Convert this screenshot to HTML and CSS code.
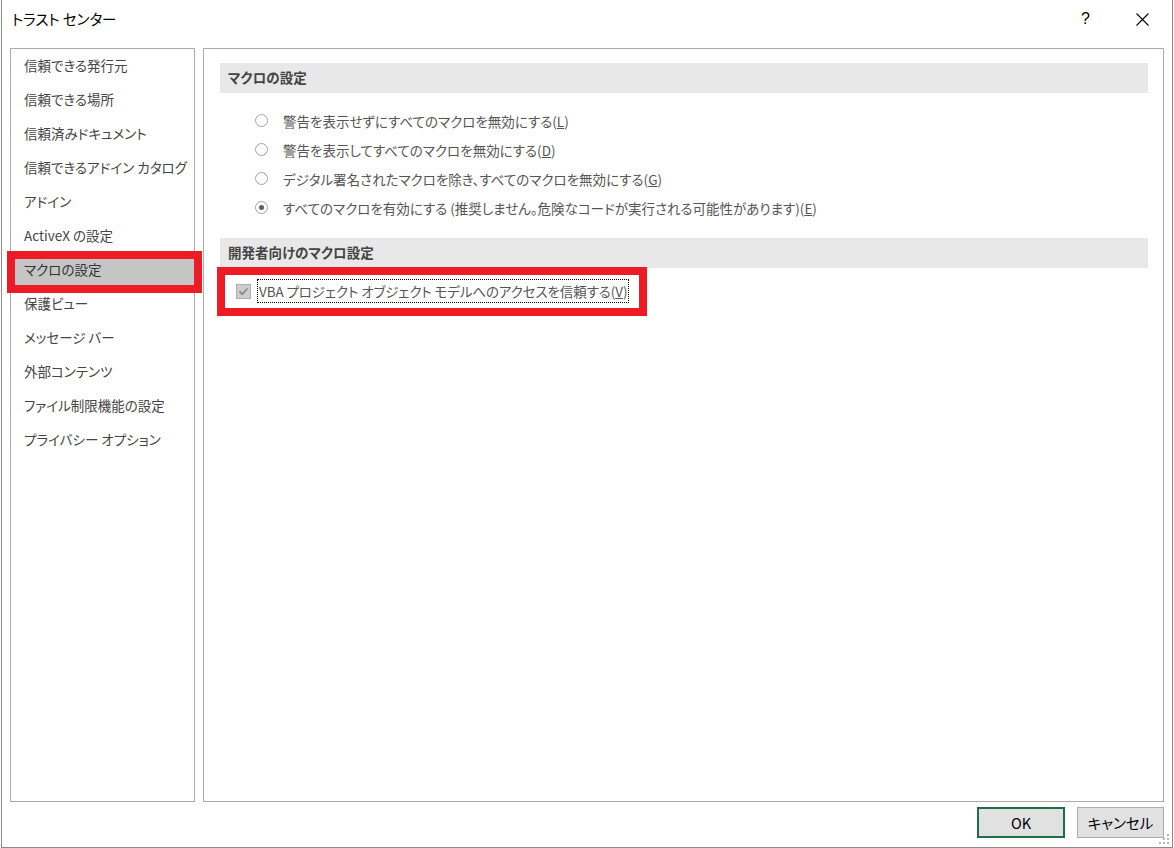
FILE: index.html
```html
<!DOCTYPE html>
<html lang="ja">

<head>
    <meta charset="UTF-8">
    <title>トラスト センター</title>
    <link rel="stylesheet" href="styles.css">
</head>

<body>
    <div class="window">
        <!-- Title bar -->
        <div class="titlebar">
            <span class="title">トラスト センター</span>
            <span class="help">?</span>
            <span class="close">
                <svg width="13" height="13" viewBox="0 0 13 13">
                    <path d="M0.5 0.5 L12.5 12.5 M12.5 0.5 L0.5 12.5" stroke="#000" stroke-width="1.1" fill="none"/>
                </svg>
            </span>
        </div>

        <div class="content">
            <!-- Left navigation -->
            <ul class="nav">
                <li>信頼できる発行元</li>
                <li>信頼できる場所</li>
                <li>信頼済みドキュメント</li>
                <li>信頼できるアドイン カタログ</li>
                <li>アドイン</li>
                <li>ActiveX の設定</li>
                <li class="selected">マクロの設定</li>
                <li>保護ビュー</li>
                <li>メッセージ バー</li>
                <li>外部コンテンツ</li>
                <li>ファイル制限機能の設定</li>
                <li>プライバシー オプション</li>
            </ul>

            <!-- Settings panel -->
            <div class="panel">
                <div class="section-head">マクロの設定</div>
                <div class="options">
                    <div class="option"><span class="radio"></span>警告を表示せずにすべてのマクロを無効にする(<u>L</u>)</div>
                    <div class="option"><span class="radio"></span>警告を表示してすべてのマクロを無効にする(<u>D</u>)</div>
                    <div class="option"><span class="radio"></span>デジタル署名されたマクロを除き、すべてのマクロを無効にする(<u>G</u>)</div>
                    <div class="option"><span class="radio checked"></span>すべてのマクロを有効にする (推奨しません。危険なコードが実行される可能性があります)(<u>E</u>)</div>
                </div>

                <div class="section-head second">開発者向けのマクロ設定</div>
                <div class="check-row">
                    <span class="checkbox">
                        <svg width="13" height="13" viewBox="0 0 13 13">
                            <path d="M2.5 6.5 L5.2 9.2 L10.5 3.5" stroke="#8a8a8a" stroke-width="1.8" fill="none"/>
                        </svg>
                    </span>
                    <span class="focus">VBA プロジェクト オブジェクト モデルへのアクセスを信頼する(<u>V</u>)</span>
                </div>
            </div>
        </div>

        <div class="footer">
            <button class="btn default">OK</button>
            <button class="btn">キャンセル</button>
        </div>

        <svg class="grip" width="11" height="11" viewBox="0 0 11 11">
            <rect x="8" y="0" width="2" height="2" fill="#b8b8b8"/>
            <rect x="4" y="4" width="2" height="2" fill="#b8b8b8"/>
            <rect x="8" y="4" width="2" height="2" fill="#b8b8b8"/>
            <rect x="0" y="8" width="2" height="2" fill="#b8b8b8"/>
            <rect x="4" y="8" width="2" height="2" fill="#b8b8b8"/>
            <rect x="8" y="8" width="2" height="2" fill="#b8b8b8"/>
        </svg>
    </div>

    <!-- red annotation boxes -->
    <div class="mark mark-nav"></div>
    <div class="mark mark-check"></div>
</body>

</html>
```

FILE: styles.css
```css
body {
    margin: 0;
    width: 1174px;
    height: 848px;
    background-color: #fff;
    font-family: "Noto Sans CJK JP", "Noto Sans", sans-serif;
    font-feature-settings: "palt";
    position: relative;
    overflow: hidden;
}

.window {
    box-sizing: border-box;
    margin-left: 1px;
    width: 1172px;
    height: 848px;
    border: 1px solid #8a8a8a;
    border-top: none;
    background-color: #fff;
    position: relative;
}

.titlebar {
    height: 48px;
    display: flex;
    align-items: flex-start;
    position: relative;
}

.title {
    margin: 9px 0 0 10px;
    font-size: 14.5px;
    color: #000;
    line-height: 20px;
}

.help {
    position: absolute;
    left: 1079px;
    top: 9px;
    font-size: 16px;
    line-height: 20px;
    font-family: "Liberation Sans", sans-serif;
    color: #000;
}

.close {
    position: absolute;
    left: 1134px;
    top: 13px;
    line-height: 0;
}

.content {
    display: flex;
    gap: 8px;
    padding: 0 8px 0 8px;
    height: 754px;
}

.nav {
    list-style: none;
    margin: 0;
    padding: 0;
    width: 185px;
    box-sizing: border-box;
    border: 1px solid #acacac;
    font-size: 13.5px;
    color: #444;
}

.nav li {
    height: 34px;
    line-height: 33px;
    padding-left: 13px;
    white-space: nowrap;
}

.nav li.selected {
    background-color: #c5c5c5;
    color: #333;
}

.panel {
    flex: 1;
    border: 1px solid #acacac;
    padding: 14px 15px 0 16px;
}

.section-head {
    height: 30px;
    line-height: 29px;
    background-color: #e8e8e8;
    padding-left: 8px;
    font-size: 13.5px;
    font-weight: bold;
    color: #444;
}

.section-head.second {
    margin-top: 16px;
}

.options {
    margin-top: 13px;
    padding-left: 35px;
}

.option {
    height: 29px;
    display: flex;
    align-items: center;
    font-size: 13.5px;
    color: #555;
    white-space: nowrap;
}

.radio {
    box-sizing: border-box;
    width: 13px;
    height: 13px;
    border: 1px solid #a6a6a6;
    border-radius: 50%;
    margin-right: 15px;
    display: flex;
    align-items: center;
    justify-content: center;
    background-color: #fff;
}

.radio.checked::after {
    content: "";
    width: 5px;
    height: 5px;
    border-radius: 50%;
    background-color: #606060;
}

.check-row {
    margin-top: 11px;
    height: 24px;
    display: flex;
    align-items: center;
    padding-left: 16px;
    font-size: 13.5px;
    color: #555;
}

.checkbox {
    box-sizing: border-box;
    width: 15px;
    height: 15px;
    border: 1px solid #b0b0b0;
    background-color: #cdcdcd;
    display: flex;
    align-items: center;
    justify-content: center;
    margin-right: 6px;
}

.focus {
    border: 1px dotted #000;
    padding: 0 1px;
    line-height: 22px;
    white-space: nowrap;
    letter-spacing: -0.1px;
}

.footer {
    display: flex;
    justify-content: flex-end;
    gap: 12px;
    padding: 5px 8px 0 0;
}

.btn {
    box-sizing: border-box;
    height: 31px;
    background-color: #e1e1e1;
    border: 1px solid #adadad;
    font-family: "Noto Sans CJK JP", sans-serif;
    font-feature-settings: "palt";
    font-size: 14.5px;
    color: #000;
    padding: 0;
    width: 87px;
}

.btn.default {
    width: 88px;
    border: 2px solid #1f6f46;
}

.grip {
    position: absolute;
    right: 2px;
    bottom: 2px;
}

.mark {
    position: absolute;
    box-sizing: border-box;
    border: 8px solid #ed1c24;
}

.mark-nav {
    left: 7px;
    top: 251px;
    width: 195px;
    height: 42px;
}

.mark-check {
    left: 217px;
    top: 267px;
    width: 430px;
    height: 49px;
}
```
